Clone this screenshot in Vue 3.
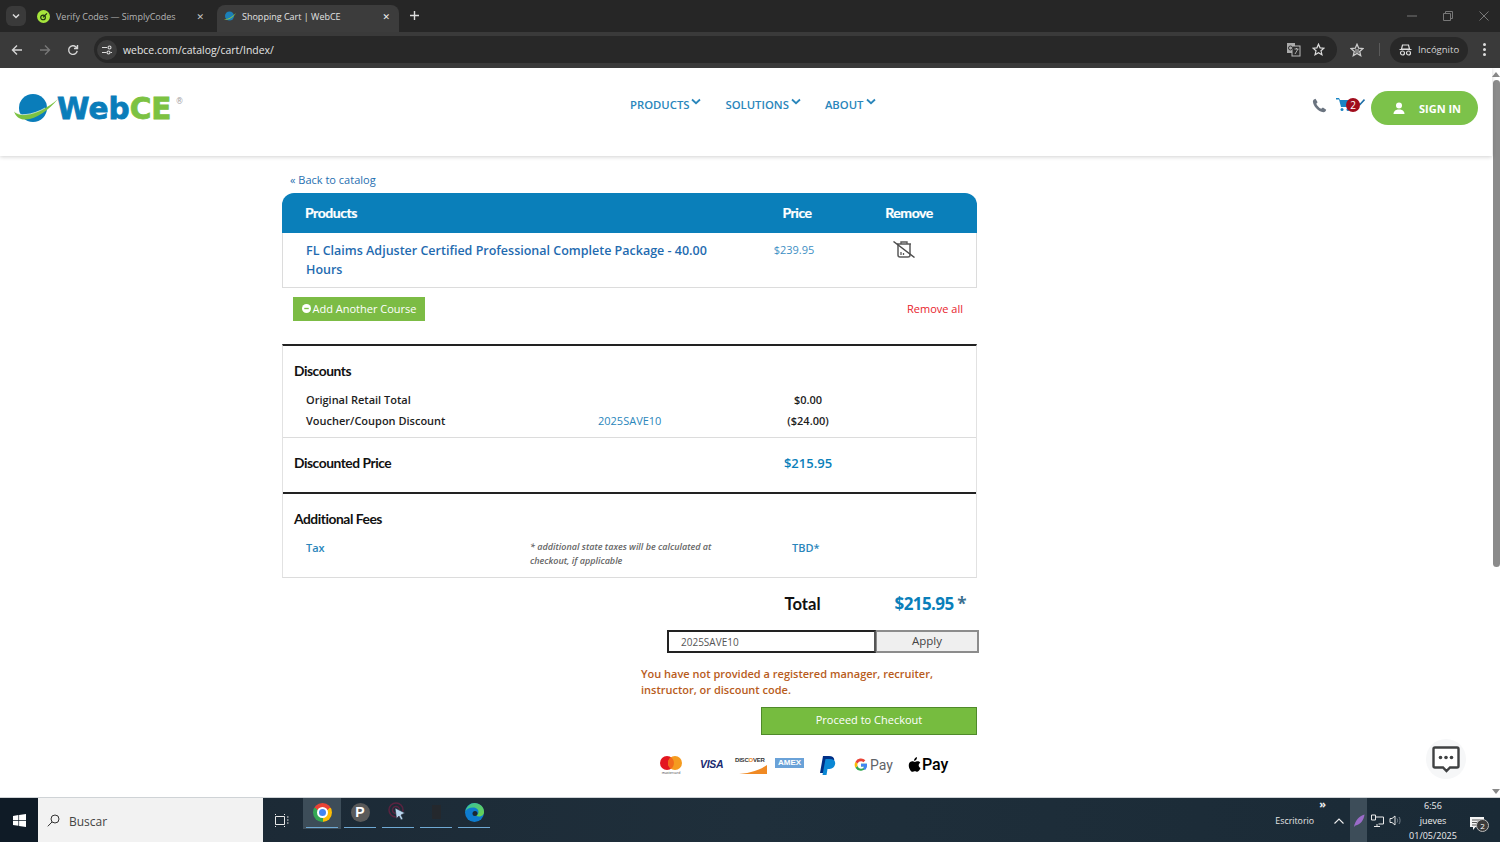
<script setup>
const taskApps = [
  { id: 'chrome', active: true },
  { id: 'p' },
  { id: 'cursor' },
  { id: 'dark' },
  { id: 'edge' }
]
</script>

<template>
  <div class="screen">
    <div class="tabstrip">
      <div class="tab-search"><svg width="10" height="10" viewBox="0 0 10 10"><path d="M2 3.5 5 6.5 8 3.5" fill="none" stroke="#ddd" stroke-width="1.5"/></svg></div>
      <div class="tab">
        <span class="fav-simply"><svg width="9" height="9" viewBox="0 0 10 10"><circle cx="4.5" cy="6" r="2.6" fill="none" stroke="#1e3312" stroke-width="1.3"/><path d="M4.5 6 8.8 1.5" fill="none" stroke="#1e3312" stroke-width="1.4"/></svg></span>
        <span class="tab-title">Verify Codes — SimplyCodes</span>
        <span class="tab-x">✕</span>
      </div>
      <div class="tab active">
        <svg class="fav-web" width="13" height="11" viewBox="0 0 13 11"><circle cx="6.5" cy="5" r="4.5" fill="#1b80b8"/><path d="M0 8c4 1 9-2 13-6-3 5-8 8-13 6z" fill="#8bc34a"/></svg>
        <span class="tab-title light">Shopping Cart | WebCE</span>
        <span class="tab-x light">✕</span>
      </div>
      <svg class="new-tab" width="11" height="11" viewBox="0 0 11 11"><path d="M5.5 1v9M1 5.5h9" stroke="#ddd" stroke-width="1.4"/></svg>
      <div class="window-controls">
        <svg width="10" height="10" viewBox="0 0 10 10"><path d="M0 5h10" stroke="#777" stroke-width="1"/></svg>
        <svg width="10" height="10" viewBox="0 0 10 10"><path d="M.5 2.5h7v7h-7zM2.5 2.5V.5h7v7h-2" fill="none" stroke="#777" stroke-width="1"/></svg>
        <svg width="10" height="10" viewBox="0 0 10 10"><path d="M.5.5l9 9M9.5.5l-9 9" stroke="#777" stroke-width="1"/></svg>
      </div>
    </div>

    <div class="toolbar">
      <div class="nav-btns">
        <svg width="12" height="12" viewBox="0 0 12 12"><path d="M11 6H1.5M6 1.5 1.5 6 6 10.5" fill="none" stroke="#d5d5d5" stroke-width="1.4"/></svg>
        <svg width="12" height="12" viewBox="0 0 12 12"><path d="M1 6h9.5M6 1.5 10.5 6 6 10.5" fill="none" stroke="#777" stroke-width="1.4"/></svg>
        <svg width="12" height="12" viewBox="0 0 12 12"><path d="M10.2 6.8A4.3 4.3 0 1 1 9 3L10.5 4.5M10.5 1v3.5H7" fill="none" stroke="#d5d5d5" stroke-width="1.4"/></svg>
      </div>
      <div class="omnibox">
        <span class="site-chip"><svg width="12" height="12" viewBox="0 0 12 12"><path d="M1 3.5h5M9.5 8.5H11M1 8.5h4.5" stroke="#ddd" stroke-width="1.2"/><circle cx="8.5" cy="3.5" r="1.5" fill="none" stroke="#ddd" stroke-width="1.1"/><circle cx="7.5" cy="8.5" r="1.5" fill="none" stroke="#ddd" stroke-width="1.1"/></svg></span>
        <span class="url">webce.com/catalog/cart/Index/</span>
        <svg class="translate" width="15" height="15" viewBox="0 0 15 15"><rect x="1" y="1" width="8" height="10" fill="#aaa"/><rect x="6" y="4" width="8" height="10" fill="#2d2d2d" stroke="#bbb"/><path d="M8.5 7h4M10.5 6v1M9 12l3-5" stroke="#ccc" fill="none" stroke-width=".8"/><circle cx="4.5" cy="6" r="2" fill="none" stroke="#333"/></svg>
        <svg class="star" width="13" height="13" viewBox="0 0 14 14"><path d="M7 1.3 8.7 5.2 12.9 5.6 9.7 8.4 10.7 12.6 7 10.4 3.3 12.6 4.3 8.4 1.1 5.6 5.3 5.2Z" fill="none" stroke="#ddd" stroke-width="1.3"/></svg>
      </div>
      <svg class="star-list" width="14" height="14" viewBox="0 0 14 14"><path d="M7 1.3 8.7 5.2 12.9 5.6 9.7 8.4 10.7 12.6 7 10.4 3.3 12.6 4.3 8.4 1.1 5.6 5.3 5.2Z" fill="none" stroke="#ccc" stroke-width="1.3"/><path d="M5 7h4M5 9h4" stroke="#ccc"/></svg>
      <span class="tool-divider"></span>
      <div class="incognito">
        <svg width="13" height="12" viewBox="0 0 13 12"><path d="M3.5 1h6l1 4h-8zM.5 5.500h12" fill="none" stroke="#ddd" stroke-width="1.2"/><circle cx="3.5" cy="9" r="2" fill="none" stroke="#ddd" stroke-width="1.2"/><circle cx="9.5" cy="9" r="2" fill="none" stroke="#ddd" stroke-width="1.2"/></svg>
        <span>Incógnito</span>
      </div>
      <div class="menu-dots"><i></i><i></i><i></i></div>
    </div>

    <div class="viewport">
      <div class="page">
        <header class="site-header">
          <div class="logo">
            <svg width="46" height="30" viewBox="0 0 46 30">
              <circle cx="19" cy="14" r="14" fill="#0a7dba"/>
              <path d="M0 17.500C3 20 7 21 12 20.500 22 19.500 35 13 44 5 35 16 22 25 12 25.500 6 26 2 23 0 17.500Z" fill="#7cc242"/>
              <path d="M0 17.500C3 20 7 21 12 20.500 18 20 25 17.500 31 14" fill="none" stroke="#fff" stroke-width=".6"/>
            </svg>
            <span class="logo-web">Web</span><span class="logo-ce">CE</span><sup class="logo-r">®</sup>
          </div>
          <nav class="main-nav">
            <a>PRODUCTS<svg width="10" height="7" viewBox="0 0 10 7"><path d="M1 1.5 5 5.200 9 1.500" fill="none" stroke="#2a86bb" stroke-width="1.8"/></svg></a>
            <a>SOLUTIONS<svg width="10" height="7" viewBox="0 0 10 7"><path d="M1 1.5 5 5.200 9 1.500" fill="none" stroke="#2a86bb" stroke-width="1.8"/></svg></a>
            <a>ABOUT<svg width="10" height="7" viewBox="0 0 10 7"><path d="M1 1.5 5 5.200 9 1.500" fill="none" stroke="#2a86bb" stroke-width="1.8"/></svg></a>
          </nav>
          <div class="header-right">
            <svg class="phone" width="15" height="15" viewBox="0 0 15 15"><path d="M3.5.8 5.600 4.200 4.300 5.700C5 7.500 7 9.800 9.200 10.800L10.900 9.500 14.200 11.800C13.800 13.400 12.800 14.300 11.400 14.200 6 13.700 1.200 8.200.9 3.600.8 2.400 2 1.100 3.500.8Z" fill="#6b7480"/></svg>
            <div class="cart">
              <svg width="29" height="16" viewBox="0 0 29 16"><path d="M0 1h3l1 2h11l-2 7H5L3 2.500H0Z" fill="#1a85c4"/><circle cx="6" cy="12.500" r="1.500" fill="#1a85c4"/><circle cx="12" cy="12.500" r="1.500" fill="#1a85c4"/><path d="M21 5.500 24 7.500 28.500 2.500" fill="none" stroke="#1f6fa8" stroke-width="1.6"/></svg>
              <span class="cart-badge">2</span>
            </div>
            <button class="sign-in">
              <svg width="12" height="12" viewBox="0 0 12 12"><circle cx="6" cy="3.500" r="3" fill="#fff"/><path d="M.5 12c0-3 2.500-4 4-4.500h3c1.500.5 4 1.500 4 4.500Z" fill="#fff"/></svg>
              <span>SIGN IN</span>
            </button>
          </div>
        </header>

        <main class="cart-page">
          <a class="back-link">« Back to catalog</a>

          <section class="products">
            <div class="products-head">
              <span class="col-name">Products</span>
              <span class="col-center">Price</span>
              <span class="col-center">Remove</span>
            </div>
            <div class="products-row">
              <a class="product-name">FL Claims Adjuster Certified Professional Complete Package - 40.00 Hours</a>
              <span class="product-price">$239.95</span>
              <span class="product-remove">
                <svg width="22" height="17" viewBox="0 0 22 17"><path d="M8 3V1h6v2M4 3h14" fill="none" stroke="#5b5b5b" stroke-width="1.4"/><path d="M5 3v11a2 2 0 0 0 2 2h8a2 2 0 0 0 2-2V3" fill="none" stroke="#5b5b5b" stroke-width="1.5"/><path d="M8 14v-3M10.500 14v-2" stroke="#5b5b5b" stroke-width="1.3"/><path d="M.5.5 21.500 16.500" stroke="#4a4a4a" stroke-width="1.4"/></svg>
              </span>
            </div>
          </section>

          <div class="cart-actions">
            <button class="add-course">
              <svg width="9" height="9" viewBox="0 0 10 10"><circle cx="5" cy="5" r="5" fill="#fff"/><path d="M2.500 5h5" stroke="#7cc242" stroke-width="1.5"/></svg>
              Add Another Course
            </button>
            <a class="remove-all">Remove all</a>
          </div>

          <section class="summary">
            <div class="block discounts">
              <h3>Discounts</h3>
              <div class="line"><span>Original Retail Total</span><span></span><span class="amt">$0.00</span></div>
              <div class="line"><span>Voucher/Coupon Discount</span><a class="code">2025SAVE10</a><span class="amt">($24.00)</span></div>
            </div>
            <div class="block discounted">
              <h3>Discounted Price</h3>
              <strong>$215.95</strong>
            </div>
            <div class="block fees">
              <h3>Additional Fees</h3>
              <div class="tax-line">
                <a>Tax</a>
                <em>* additional state taxes will be calculated at checkout, if applicable</em>
                <a>TBD*</a>
              </div>
            </div>
          </section>

          <div class="total">
            <span>Total</span>
            <strong>$215.95 <i>*</i></strong>
          </div>

          <form class="coupon" @submit.prevent>
            <input value="2025SAVE10" aria-label="Discount code" />
            <button type="button">Apply</button>
          </form>

          <p class="warning">You have not provided a registered manager, recruiter, instructor, or discount code.</p>

          <button class="checkout">Proceed to Checkout</button>

          <div class="pay-logos">
            <div class="mc">
              <svg width="22" height="14" viewBox="0 0 22 14"><circle cx="7" cy="7" r="7" fill="#e3161f"/><circle cx="15" cy="7" r="7" fill="#f59b1f"/><path d="M11 1.300a7 7 0 0 1 0 11.400 7 7 0 0 1 0-11.400Z" fill="#f26a1b"/></svg>
              <span>mastercard</span>
            </div>
            <span class="visa">VISA</span>
            <div class="discover">
              <span>DISC<b>O</b>VER</span>
              <svg width="32" height="9" viewBox="0 0 32 9"><path d="M32 0V9H0C13 9 25 5 32 0Z" fill="#f08a24"/></svg>
            </div>
            <span class="amex">AMEX</span>
            <svg class="paypal" width="16" height="19" viewBox="0 0 16 19"><path d="M3 0h6c4 0 6 2 5 5.500-1 3.500-3.500 5-7 5H5L4 17H0Z" fill="#003087"/><path d="M5.500 3H10c3.500 0 6 2 5 5.500S11.500 13 8.500 13H7.500L6.500 19H2.500Z" fill="#0a87d4"/></svg>
            <div class="gpay">
              <svg width="14" height="14" viewBox="0 0 14 14"><path d="M12.900 5.800H7v2.700h3.400A3.600 3.600 0 0 1 3.600 8L1.400 9.800A6.300 6.300 0 0 0 13 7c0-.4 0-.8-.1-1.200Z" fill="#34a853"/><path d="M3.600 8a3.600 3.600 0 0 1 0-2.400L1.400 3.900a6.300 6.300 0 0 0 0 5.900Z" fill="#fbbc05"/><path d="M7 3.300c1 0 1.800.3 2.400.9l2-2A6.300 6.300 0 0 0 1.400 3.900l2.200 1.700A3.700 3.700 0 0 1 7 3.300Z" fill="#ea4335"/><path d="M12.900 5.800H7v2.700h3.400c-.2.800-.7 1.400-1.300 1.800l2 1.600c1.200-1.100 1.900-2.800 1.900-4.900 0-.4 0-.8-.1-1.200Z" fill="#4285f4"/></svg>
              <span>Pay</span>
            </div>
            <div class="applepay">
              <svg width="13" height="15" viewBox="0 0 13 15"><path d="M9 .3c.1 1-.3 1.900-.8 2.500-.6.700-1.400 1.100-2.200 1C5.900 2.900 6.300 2 6.800 1.400 7.400.8 8.300.3 9 .3ZM12.500 11c-.3.800-.5 1.100-.9 1.800-.6.900-1.400 2-2.400 2-.9 0-1.100-.6-2.300-.6s-1.500.6-2.400.6c-1 0-1.800-1-2.300-1.900C.6 10.500.4 7.700 1.300 6.100 2 5 3.100 4.300 4.200 4.300s1.800.6 2.700.6 1.400-.6 2.700-.6c1 0 2 .5 2.700 1.400-2.400 1.300-2 4.600.2 5.300Z" fill="#000"/></svg>
              <span>Pay</span>
            </div>
          </div>
        </main>

        <button class="chat" aria-label="Chat">
          <svg width="30" height="30" viewBox="0 0 30 30"><path d="M4 3.500h22a1.500 1.500 0 0 1 1.500 1.500v17a1.500 1.500 0 0 1-1.500 1.500h-7l-3.500 3.500-3.500-3.500H4A1.500 1.500 0 0 1 2.500 22V5A1.500 1.500 0 0 1 4 3.500Z" fill="#fff" stroke="#3f4142" stroke-width="2.400"/><circle cx="9.500" cy="13.500" r="1.800" fill="#3f4142"/><circle cx="15" cy="13.500" r="1.800" fill="#3f4142"/><circle cx="20.500" cy="13.500" r="1.800" fill="#3f4142"/></svg>
        </button>
      </div>

      <div class="scrollbar">
        <span class="arrow up"></span>
        <span class="thumb"></span>
        <span class="arrow down"></span>
      </div>
    </div>

    <footer class="taskbar">
      <div class="start"><svg width="13" height="13" viewBox="0 0 13 13"><path d="M0 1.900 5.400 1.100V6H0ZM6.100 1 13 0V6H6.100ZM0 6.800H5.400V11.800L0 11ZM6.100 6.800H13V13L6.100 12Z" fill="#fff"/></svg></div>
      <div class="search-box">
        <svg width="13" height="13" viewBox="0 0 13 13"><circle cx="8" cy="5" r="4" fill="none" stroke="#333" stroke-width="1"/><path d="M5 8 .8 12.300" stroke="#333" stroke-width="1"/></svg>
        <span>Buscar</span>
      </div>
      <div class="task-view"><svg width="14" height="13" viewBox="0 0 14 13"><path d="M.5 2.500h9v8h-9zM.5 0v1M9.500 0v1M.5 12v1M9.500 12v1M12 3h1.500M12 6h1.500M12 9h1.500" fill="none" stroke="#e8e8e8"/></svg></div>
      <div class="apps">
        <div v-for="app in taskApps" :key="app.id" class="app" :class="{ current: app.active }">
          <span v-if="app.id === 'chrome'" class="chrome-ic"><i></i></span>
          <span v-else-if="app.id === 'p'" class="p-ic">P</span>
          <svg v-else-if="app.id === 'cursor'" width="20" height="20" viewBox="0 0 20 20"><circle cx="8" cy="8" r="7" fill="none" stroke="#5a2340" stroke-width="1.5"/><circle cx="8" cy="8" r="3.500" fill="none" stroke="#5a2340" stroke-width="1.5"/><path d="M7 6 17 11 13 13 15 17 13 18 11 14 8.500 16.500Z" fill="#b9d6ee" stroke="#1b2733" stroke-width=".6"/></svg>
          <span v-else-if="app.id === 'dark'" class="dark-ic"></span>
          <svg v-else width="19" height="19" viewBox="0 0 19 19"><defs><linearGradient id="edgeG" x1="0" y1="0" x2="1" y2="1"><stop offset="0" stop-color="#35c1a0"/><stop offset="1" stop-color="#6fd34a"/></linearGradient></defs><circle cx="9.500" cy="9.500" r="9.500" fill="#0e7ccf"/><path d="M.5 8.500C1.500 3 5.500 0 9.500 0c5 0 9.500 3.500 9.500 9 0 3-2.500 4.500-5 4.500-2 0-3.500-.8-3.500-1.500 2.500 0 3-1.500 3-3C13.500 6 11 4.500 8 4.500 4.500 4.500 1.500 6 .5 8.500Z" fill="url(#edgeG)"/><circle cx="10" cy="10.500" r="2.500" fill="#1b2733"/></svg>
        </div>
      </div>
      <div class="tray">
        <div class="desk"><span class="chev">»</span><span>Escritorio</span></div>
        <svg class="caret" width="10" height="6" viewBox="0 0 10 6"><path d="M.5 5.500 5 1l4.500 4.500" fill="none" stroke="#eee" stroke-width="1.1"/></svg>
        <div class="feather"><svg width="12" height="14" viewBox="0 0 12 14"><path d="M1 13C2 7 6 2 11.500.5 11 6 7 11 2.500 11.500Z" fill="#9b6bc9"/></svg></div>
        <svg class="tray-ic" width="13" height="13" viewBox="0 0 13 13"><path d="M.5 1h4v3M4.500 3h8v7h-5M6 10v2.500M3 12.500h6M.5 1v5h4V4" fill="none" stroke="#eaeaea"/></svg>
        <svg class="tray-ic" width="13" height="13" viewBox="0 0 13 13"><path d="M1 4.500h2L6 2v9L3 8.500H1Z" fill="none" stroke="#e5e5e5"/><path d="M8 4.500c.8 1 .8 3 0 4M10 3c1.400 2 1.400 5 0 7" fill="none" stroke="#7a8590"/></svg>
        <div class="clock"><span>6:56</span><span>jueves</span><span>01/05/2025</span></div>
        <div class="notify">
          <svg width="14" height="14" viewBox="0 0 14 14"><path d="M0 0h14v10H5.500L3 13v-3H0Z" fill="#f4f4f4"/><path d="M2 3h10M2 5.500h10M2 8h6" stroke="#333" stroke-width=".8"/></svg>
          <span>2</span>
        </div>
      </div>
    </footer>
  </div>
</template>

<style>
html, body { margin: 0; height: 100%; overflow: hidden; background: #fff; }
</style>

<style scoped>
.screen { width: 1500px; height: 842px; display: flex; flex-direction: column; overflow: hidden; font-family: "Open Sans", "Liberation Sans", sans-serif; color: #222; }
button { font-family: inherit; cursor: pointer; }
a { cursor: pointer; }

.tabstrip { flex: 0 0 32px; background: #262626; display: flex; align-items: flex-end; }
.tab-search { width: 20px; height: 20px; margin: 0 4px 6px 6px; border-radius: 6px; background: #3a3a3a; display: flex; align-items: center; justify-content: center; }
.tab { width: 187px; height: 27px; box-sizing: border-box; display: flex; align-items: center; padding: 0 13px 4px 7px; gap: 6px; font-size: 9px; color: #b4b4b4; }
.tab.active { width: 182px; padding-right: 9px; background: #3c3c3c; border-radius: 8px 8px 0 0; padding-left: 6px; color: #e2e2e2; }
.fav-simply { width: 13px; height: 13px; border-radius: 50%; background: #a6e63c; display: flex; align-items: center; justify-content: center; }
.tab-title { flex: 1; white-space: nowrap; }
.tab-x { font-size: 9px; color: #c5c5c5; font-family: "DejaVu Sans", sans-serif; }
.tab-x.light { color: #eee; }
.new-tab { margin: 0 0 11px 10px; }
.window-controls { margin-left: auto; display: flex; gap: 26px; padding: 0 11px 11px 0; }

.toolbar { flex: 0 0 36px; box-sizing: border-box; padding-bottom: 1px; background: #3a3a3a; display: flex; align-items: center; }
.nav-btns { display: flex; gap: 16px; padding-left: 11px; }
.omnibox { width: 1243px; height: 27px; margin-left: 15px; border-radius: 14px; background: #282828; display: flex; align-items: center; box-sizing: border-box; padding: 0 12px 0 3px; }
.site-chip { width: 20px; height: 20px; border-radius: 50%; background: #3c3c3c; display: flex; align-items: center; justify-content: center; }
.url { margin-left: 6px; flex: 1; font-size: 10.45px; color: #e4e4e4; }
.star { margin-left: 11px; }
.star-list { margin-left: 13px; }
.tool-divider { width: 1px; height: 13px; background: #5a5a5a; margin: 0 10px 0 15px; }
.incognito { width: 78px; height: 26px; border-radius: 13px; background: #282828; display: flex; align-items: center; justify-content: center; gap: 6px; font-size: 9.5px; color: #d5d5d5; }
.menu-dots { display: flex; flex-direction: column; gap: 2px; margin-left: 15px; }
.menu-dots i { width: 3px; height: 3px; border-radius: 50%; background: #ddd; }

.viewport { flex: 0 0 729px; display: flex; overflow: hidden; }
.page { flex: 1; position: relative; min-width: 0; }
.scrollbar { flex: 0 0 8px; padding: 4px 0 3px; display: flex; flex-direction: column; align-items: center; background: #fff; box-sizing: border-box; }
.arrow { width: 0; height: 0; border-left: 4px solid transparent; border-right: 4px solid transparent; }
.arrow.up { border-bottom: 5px solid #888; margin-bottom: 3px; }
.arrow.down { border-top: 5px solid #888; margin-top: auto; }
.thumb { width: 7px; height: 487px; background: #8b8b8b; border-radius: 4px; }

.site-header { height: 88px; background: #fff; box-shadow: 0 1px 4px rgba(0,0,0,.18); display: grid; grid-template-columns: 616px auto 1fr; align-items: center; padding: 0 14px 8px; box-sizing: border-box; position: relative; }
.logo { display: flex; align-items: center; height: 40px; margin-top: 3px; font-family: "DejaVu Sans", sans-serif; font-weight: 700; font-size: 29.5px; line-height: 1; }
.logo svg { margin: -1px -3px 0 0; }
.logo-web { color: #0a7dba; -webkit-text-stroke: .8px #0a7dba; }
.logo-ce { color: #7cc242; -webkit-text-stroke: .8px #7cc242; }
.logo-r { font-size: 8px; color: #a0a0a0; font-weight: 400; margin: -16px 0 0 4px; }
.main-nav { display: flex; gap: 24px; margin-top: -8px; font-size: 11.3px; font-weight: 600; color: #2a86bb; }
.main-nav a { display: flex; align-items: flex-start; gap: 2px; }
.main-nav svg { margin-top: 1px; }
.header-right { justify-self: end; display: flex; align-items: center; }
.phone { margin: -6px 0 0 1px; }
.cart { position: relative; margin: -8px 6px 0 9px; height: 16px; }
.cart-badge { position: absolute; left: 10px; top: 2px; width: 14px; height: 14px; border-radius: 50%; background: #a00d1c; color: #fff; font-size: 10px; line-height: 14px; text-align: center; }
.sign-in { width: 107px; height: 34px; border: 0; border-radius: 17px; background: #7cc24a; color: #fff; display: flex; align-items: center; padding: 0 0 0 22px; gap: 14px; font-size: 11px; font-weight: 700; }

.cart-page { width: 695px; margin-left: 282px; }
.back-link { display: block; padding: 15px 0 0 8px; height: 22px; font-size: 11px; line-height: 17px; color: #1f6fb0; }
.products-head { height: 40px; padding-bottom: 1px; box-sizing: border-box; border-radius: 12px 12px 0 0; background: #0a7fba; color: #fff; font-family: "Lato", sans-serif; font-weight: 700; font-size: 14px; letter-spacing: -.45px; -webkit-text-stroke: .2px #fff; display: grid; grid-template-columns: 460px 110px 114px; align-items: center; }
.col-name { padding-left: 23px; }
.col-center { text-align: center; }
.products-row { height: 55px; box-sizing: border-box; border: solid #dcdcdc; border-width: 0 1px 1px; display: grid; grid-template-columns: 459px 110px 114px; }
.product-name { padding: 8px 0 0 23px; width: 420px; font-size: 12.5px; line-height: 19px; font-weight: 600; color: #1f6bb0; }
.product-price { padding: 8px 6px 0 0; font-size: 11px; line-height: 18px; text-align: center; color: #3e8fc4; }
.product-remove { padding: 8px 10px 0 0; text-align: center; }

.cart-actions { display: flex; justify-content: space-between; align-items: center; padding: 9px 14px 0 11px; }
.add-course { height: 24px; width: 132px; border: 0; padding: 0 0 2px; background: #7cbc45; color: #fff; font-size: 11px; display: flex; align-items: center; justify-content: center; gap: 2px; white-space: nowrap; }
.remove-all { font-size: 11px; color: #e8232c; margin-bottom: 1px; }

.summary { margin-top: 23px; border-top: 2px solid #222; border-left: 1px solid #e2e2e2; border-right: 1px solid #e2e2e2; border-bottom: 1px solid #dcdcdc; }
.block { box-sizing: border-box; }
h3 { margin: 0; font-family: "Lato", sans-serif; font-weight: 700; font-size: 13.8px; letter-spacing: -.45px; color: #111; }
.discounts { height: 92px; padding: 16px 0 0 11px; border-bottom: 1px solid #dcdcdc; }
.discounts h3 { line-height: 18px; margin-bottom: 9px; }
.line { display: grid; grid-template-columns: 292px 150px 120px; height: 21px; align-items: center; padding-left: 12px; font-size: 11px; font-weight: 600; color: #1d1d1d; }
.line .code { font-weight: 400; font-size: 11px; color: #2a86bb; }
.amt { text-align: center; }
.discounted { height: 56px; padding: 0 0 6px 11px; border-bottom: 2px solid #222; display: grid; grid-template-columns: 454px 120px; align-items: center; }
.discounted strong { font-size: 13px; font-weight: 600; color: #0a7fba; text-align: center; margin-top: 2px; }
.fees { height: 83px; padding: 16px 0 0 11px; }
.fees h3 { line-height: 18px; margin-bottom: 13px; }
.tax-line { display: grid; grid-template-columns: 224px 262px auto; padding-left: 12px; font-size: 11px; }
.tax-line a { color: #2a86bb; font-weight: 600; line-height: 14px; }
.tax-line em { width: 190px; margin-top: -1px; font-size: 9px; line-height: 14px; color: #666; font-weight: 600; }

.total { display: flex; justify-content: flex-end; align-items: center; gap: 74px; height: 26px; margin-top: 13px; padding-right: 11px; font-family: "Lato", sans-serif; font-size: 16.6px; font-weight: 700; color: #111; }
.total strong { font-family: "Open Sans", sans-serif; font-size: 17px; font-weight: 700; color: #0a7fba; letter-spacing: -.6px; margin-top: -1px; }
.total i { font-style: normal; color: #3c6f8f; }

.coupon { display: flex; width: 312px; height: 23px; margin: 13px 0 0 385px; }
.coupon input { width: 209px; height: 23px; box-sizing: border-box; border: 2px solid #222; border-right-color: #555; padding: 0 0 0 12px; font-family: inherit; font-size: 10px; color: #555; outline: 0; background: #fff; }
.coupon button { width: 103px; height: 23px; box-sizing: border-box; background: #efefef; border: 2px solid #8c8c8c; border-left-width: 1px; color: #444; font-size: 11.5px; padding: 0 0 2px; }

.warning { margin: 13px 0 0 359px; width: 320px; font-size: 11px; line-height: 16px; font-weight: 600; color: #b85c1c; }
.checkout { display: block; width: 216px; height: 28px; margin: 9px 0 0 auto; box-sizing: border-box; border: 1px solid #4f8a2a; background: #76bc3f; color: #fff; font-size: 11px; padding: 0 0 3px; }

.pay-logos { display: flex; align-items: center; margin: 16px 0 0 378px; height: 26px; white-space: nowrap; }
.mc { width: 22px; display: flex; flex-direction: column; align-items: center; height: 20px; margin-top: 4px; }
.mc span { font-size: 3.5px; line-height: 5px; color: #444; }
.visa { margin-left: 18px; width: 22px; font-family: "Liberation Sans", sans-serif; font-style: italic; font-weight: 700; font-size: 10.5px; color: #1a2a70; letter-spacing: -.3px; margin-top: -1px; }
.discover { margin-left: 13px; width: 32px; height: 18px; font-family: "Liberation Sans", sans-serif; font-size: 6px; font-weight: 700; color: #333; line-height: 9px; display: flex; flex-direction: column; margin-top: 2px; letter-spacing: -.2px; }
.discover b { color: #f08a24; }
.discover svg { display: block; }
.amex { margin-left: 8px; width: 29px; height: 10px; background: #6aa2d8; color: #fff; font-family: "Liberation Sans", sans-serif; font-size: 8px; font-weight: 700; line-height: 10px; text-align: center; margin-top: -2px; }
.paypal { margin: 2px 0 0 16px; }
.gpay { margin-left: 18px; display: flex; align-items: center; gap: 2px; font-family: "Roboto", sans-serif; font-size: 14px; color: #5f6368; margin-top: 2px; }
.applepay { margin-left: 15px; display: flex; align-items: center; gap: 1px; font-family: "Roboto", sans-serif; font-size: 16px; font-weight: 500; color: #000; margin-top: 1px; }

.chat { position: absolute; left: 1426px; top: 671px; width: 40px; height: 40px; padding: 0; border: 0; border-radius: 50%; background: #f6f7f8; display: flex; align-items: center; justify-content: center; }

.taskbar { flex: 0 0 45px; background: linear-gradient(90deg, #1a2733, #1f2f3b 50%, #1a2a36); border-top: 1px solid #cfd3d6; box-sizing: border-box; display: flex; align-items: stretch; color: #eee; }
.start { width: 38px; background: #0f1b26; display: flex; align-items: center; justify-content: center; }
.search-box { width: 225px; background: #f2f2f2; display: flex; align-items: center; gap: 9px; padding-left: 9px; box-sizing: border-box; font-size: 12px; color: #444; }
.search-box span { margin-top: 1px; }
.task-view { width: 38px; display: flex; align-items: center; justify-content: center; }
.apps { display: flex; padding-left: 2px; }
.app { width: 38px; height: 44px; box-sizing: border-box; padding: 0 0 16px; display: flex; align-items: center; justify-content: center; position: relative; }
.app::after { content: ""; position: absolute; left: 3px; right: 3px; bottom: 14px; height: 1px; background: #6fa9d4; }
.app.current { background: linear-gradient(#3d4d59, #3d4d59) top / 100% 31px no-repeat; }
.chrome-ic { width: 19px; height: 19px; border-radius: 50%; background: conic-gradient(from -60deg, #ea4335 0 120deg, #fbbc05 120deg 240deg, #34a853 240deg 360deg); display: flex; align-items: center; justify-content: center; }
.chrome-ic i { width: 7px; height: 7px; border-radius: 50%; background: #4285f4; border: 2px solid #fff; }
.p-ic { width: 19px; height: 19px; border-radius: 50%; background: #5a5a5a; color: #fff; font-family: "Liberation Sans", sans-serif; font-weight: 700; font-size: 14px; line-height: 19px; text-align: center; }
.dark-ic { width: 9px; height: 14px; background: #24282d; }
.tray { margin-left: auto; display: flex; align-items: center; }
.desk { position: relative; font-size: 8.8px; line-height: 14px; color: #e6e6e6; white-space: nowrap; }
.chev { position: absolute; right: -12px; top: -16px; font-size: 11px; line-height: 12px; font-weight: 700; color: #eee; }
.caret { margin-left: 20px; }
.feather { width: 17px; height: 100%; margin-left: 6px; background: #3d4d59; display: flex; align-items: center; justify-content: center; }
.tray-ic { margin-left: 4px; }
.tray-ic + .tray-ic { margin-left: 5px; }
.clock { width: 60px; margin-left: 1px; display: flex; flex-direction: column; align-items: center; font-size: 9px; line-height: 15px; color: #eee; }
.notify { position: relative; width: 14px; height: 14px; margin: 0 16px 0 7px; }
.notify span { position: absolute; left: 6px; top: 5px; width: 13px; height: 13px; border-radius: 50%; background: #3a3a3a; border: 1px solid #bbb; box-sizing: border-box; font-size: 8px; line-height: 11px; text-align: center; color: #fff; }
</style>
